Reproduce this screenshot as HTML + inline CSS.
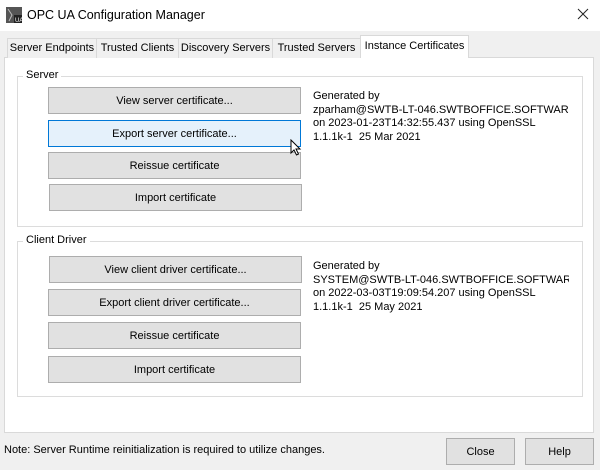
<!DOCTYPE html>
<html><head><style>
*{margin:0;padding:0;box-sizing:border-box}
body{width:600px;height:470px;background:#f0f0f0;font-family:"Liberation Sans",sans-serif;font-size:11px;color:#000;position:relative;overflow:hidden}
.a{position:absolute}
.title{left:0;top:0;width:600px;height:31px;background:#fff}
.tab{position:absolute;top:38px;height:20px;border:1px solid #d9d9d9;border-bottom:none;background:#f0f0f0;line-height:18px;text-align:center;font-size:11px;white-space:nowrap}
.panel{left:4px;top:57px;width:590px;height:376px;background:#fff;border:1px solid #d9d9d9}
.grp{border:1px solid #dcdcdc;position:absolute}
.lbl{position:absolute;background:#fff;padding:0 3px;top:-8px;left:5px;font-size:11px}
.btn{position:absolute;background:#e1e1e1;border:1px solid #adadad;text-align:center;font-size:11px;line-height:27px;width:253px;height:27px}
.hot{background:#e5f1fb;border-color:#0078d7}
.info{position:absolute;left:313px;width:256px;overflow:hidden;white-space:nowrap;line-height:13.5px;font-size:11px}
.bb{position:absolute;top:438px;width:69px;height:27px;background:#e1e1e1;border:1px solid #adadad;text-align:center;line-height:27px}
</style></head><body>
<div class="a title"></div>
<svg class="a" style="left:6px;top:7px" width="16" height="16"><rect width="16" height="16" fill="#555"/><rect x="8" y="8" width="8" height="8" fill="#222"/><text x="9" y="15" font-size="6" fill="#fff" font-family="Liberation Sans">UA</text><path d="M2 2 L6 8 L3 14" stroke="#bbb" fill="none"/></svg>
<div class="a" style="left:27px;top:8px;font-size:12.5px">OPC UA Configuration Manager</div>
<svg class="a" style="left:577px;top:8px" width="12" height="12"><path d="M1 1 L11 11 M11 1 L1 11" stroke="#222" stroke-width="1"/></svg>
<div class="a panel"></div>
<div class="tab" style="left:7px;width:90px">Server Endpoints</div>
<div class="tab" style="left:96px;width:83px">Trusted Clients</div>
<div class="tab" style="left:178px;width:95px">Discovery Servers</div>
<div class="tab" style="left:272px;width:89px">Trusted Servers</div>
<div class="tab" style="left:360px;top:35px;width:109px;height:23px;background:#fff;line-height:21px">Instance Certificates</div>

<div class="grp" style="left:17px;top:76px;width:566px;height:151px"><span class="lbl">Server</span></div>
<div class="btn" style="left:48px;top:87px">View server certificate...</div>
<div class="btn hot" style="left:48px;top:120px">Export server certificate...</div>
<div class="btn" style="left:48px;top:152px">Reissue certificate</div>
<div class="btn" style="left:49px;top:184px">Import certificate</div>
<div class="info" style="top:90px">Generated by<br>zparham@SWTB-LT-046.SWTBOFFICE.SOFTWARETOOLBOX<br>on 2023-01-23T14:32:55.437 using OpenSSL<br>1.1.1k-1&nbsp; 25 Mar 2021</div>
<svg class="a" style="left:290px;top:139px" width="12" height="18"><path d="M1 1 L1 14 L4 11 L6.5 16 L8.5 15 L6 10 L10 10 Z" fill="#fff" stroke="#000" stroke-width="1"/></svg>

<div class="grp" style="left:17px;top:241px;width:566px;height:156px"><span class="lbl">Client Driver</span></div>
<div class="btn" style="left:49px;top:256px">View client driver certificate...</div>
<div class="btn" style="left:48px;top:289px">Export client driver certificate...</div>
<div class="btn" style="left:48px;top:322px">Reissue certificate</div>
<div class="btn" style="left:48px;top:356px">Import certificate</div>
<div class="info" style="top:260px">Generated by<br>SYSTEM@SWTB-LT-046.SWTBOFFICE.SOFTWARETOOLBOX<br>on 2022-03-03T19:09:54.207 using OpenSSL<br>1.1.1k-1&nbsp; 25 May 2021</div>

<div class="a" style="left:4px;top:444px">Note: Server Runtime reinitialization is required to utilize changes.</div>
<div class="bb" style="left:446px">Close</div>
<div class="bb" style="left:525px">Help</div>
</body></html>
